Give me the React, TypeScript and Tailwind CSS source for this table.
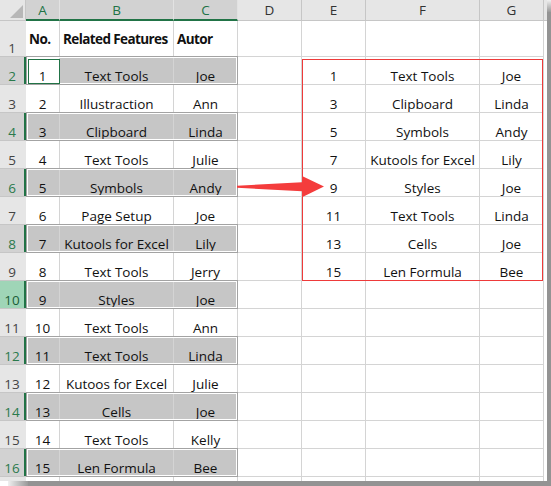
import React from "react";

const COLS = [34, 114, 64, 64, 64, 114, 64];
const LETTERS = ["A", "B", "C", "D", "E", "F", "G"];

const left: [string, string, string][] = [
  ["1", "Text Tools", "Joe"],
  ["2", "Illustraction", "Ann"],
  ["3", "Clipboard", "Linda"],
  ["4", "Text Tools", "Julie"],
  ["5", "Symbols", "Andy"],
  ["6", "Page Setup", "Joe"],
  ["7", "Kutools for Excel", "Lily"],
  ["8", "Text Tools", "Jerry"],
  ["9", "Styles", "Joe"],
  ["10", "Text Tools", "Ann"],
  ["11", "Text Tools", "Linda"],
  ["12", "Kutoos for Excel", "Julie"],
  ["13", "Cells", "Joe"],
  ["14", "Text Tools", "Kelly"],
  ["15", "Len Formula", "Bee"],
];

const right: [string, string, string][] = [
  ["1", "Text Tools", "Joe"],
  ["3", "Clipboard", "Linda"],
  ["5", "Symbols", "Andy"],
  ["7", "Kutools for Excel", "Lily"],
  ["9", "Styles", "Joe"],
  ["11", "Text Tools", "Linda"],
  ["13", "Cells", "Joe"],
  ["15", "Len Formula", "Bee"],
];

function Cell({ w, text, gray, bold }: { w: number; text?: string; gray?: boolean; bold?: boolean }) {
  return (
    <div
      className={`h-full shrink-0 border-r border-b border-[#d4d4d4] flex ${bold ? "items-center justify-start pl-[3px] pt-[1px] font-bold text-[13.5px] tracking-[-0.6px]" : "items-end justify-center pb-0"} ${gray ? "bg-[#c6c6c6]" : "bg-white"} text-[#111] leading-[16px] whitespace-nowrap overflow-visible`}
      style={{ width: w }}
    >
      {text}
    </div>
  );
}

function RowHeader({ n, selected, active }: { n: number; selected: boolean; active?: boolean }) {
  return (
    <div
      className={`h-full w-[26px] shrink-0 border-b border-[#c6c6c6] flex items-end justify-center pb-0 leading-[16px] relative ${active ? "bg-[#9fd5b7] text-[#1b5e38]" : selected ? "bg-[#d2d2d2] text-[#2a7a4c]" : "bg-[#e6e6e6] text-[#444]"}`}
    >
      <span className="pr-[2px]">{n}</span>
      {selected && <div className="absolute right-0 top-0 bottom-0 w-[2px] bg-[#217346]" />}
    </div>
  );
}

export default function App() {
  const rows = [];
  rows.push(
    <div key={1} className="flex h-[36px]">
      <RowHeader n={1} selected={false} />
      <Cell w={COLS[0]} text="No." bold />
      <Cell w={COLS[1]} text="Related Features" bold />
      <Cell w={COLS[2]} text="Autor" bold />
      <Cell w={COLS[3]} />
      <Cell w={COLS[4]} />
      <Cell w={COLS[5]} />
      <Cell w={COLS[6]} />
    </div>
  );
  for (let i = 0; i < 15; i++) {
    const n = i + 2;
    const sel = n % 2 === 0;
    const r = right[i];
    rows.push(
      <div key={n} className="flex h-[28px]">
        <RowHeader n={n} selected={sel} active={n === 10} />
        <Cell w={COLS[0]} text={left[i][0]} gray={sel && n !== 2} />
        <Cell w={COLS[1]} text={left[i][1]} gray={sel} />
        <Cell w={COLS[2]} text={left[i][2]} gray={sel} />
        <Cell w={COLS[3]} />
        <Cell w={COLS[4]} text={r ? r[0] : undefined} />
        <Cell w={COLS[5]} text={r ? r[1] : undefined} />
        <Cell w={COLS[6]} text={r ? r[2] : undefined} />
      </div>
    );
  }

  const selTops = [];
  for (let n = 2; n <= 16; n += 2) selTops.push(57 + (n - 2) * 28);

  return (
    <div className="w-[551px] h-[486px] bg-white overflow-hidden flex flex-col text-[13.5px]" style={{ fontFamily: '"Open Sans", "Noto Sans", sans-serif' }}>
      <div className="flex h-[481px]">
        <div className="w-[547px] h-full relative flex flex-col">
          <div className="flex h-[21px] shrink-0">
            <div className="w-[26px] h-full bg-[#e6e6e6] border-r border-[#c6c6c6] border-b border-b-[#c6c6c6] relative shrink-0">
              <svg className="absolute right-[2px] bottom-[2px]" width="13" height="13" viewBox="0 0 13 13">
                <polygon points="13,0 13,13 0,13" fill="#b7b7b7" />
              </svg>
            </div>
            {COLS.map((w, i) => (
              <div
                key={i}
                className={`h-full shrink-0 flex items-center justify-center leading-[16px] ${i < 3 ? "bg-[#d2d2d2] text-[#217346] border-b-2 border-b-[#217346] border-r border-r-[#e2e2e2]" : "bg-[#e6e6e6] text-[#333] border-b border-b-[#c6c6c6] border-r border-r-[#c6c6c6]"}`}
                style={{ width: w }}
              >
                {LETTERS[i]}
              </div>
            ))}
            <div className="flex-1 h-full bg-[#e6e6e6] border-b border-[#c6c6c6]" />
          </div>
          {rows}
          <div className="flex h-[4px] shrink-0">
            <div className="w-[26px] h-full bg-[#e6e6e6] shrink-0" />
            {COLS.map((w, i) => (
              <div key={i} className="h-full shrink-0 border-r border-[#d4d4d4]" style={{ width: w }} />
            ))}
          </div>

          {selTops.map((t) => (
            <div
              key={t}
              className="absolute left-[26px] w-[212px] h-[29px] border border-[#a3a3a3] shadow-[inset_0_0_0_1px_#ffffff] pointer-events-none"
              style={{ top: t - 1 }}
            />
          ))}
          <div className="absolute left-[28px] top-[59px] w-[32px] h-[25px] border border-[#217346] pointer-events-none" />

          <div className="absolute left-[302px] top-[59px] w-[241px] h-[222px] border border-[#ee3a3a] pointer-events-none" />

          <svg className="absolute left-0 top-0 pointer-events-none" width="547" height="481">
            <polygon points="237,185.7 302,182.3 302,176 324,186.5 302,197.3 302,191.3 237,187.8" fill="#f43c3c" />
          </svg>
        </div>
        <div className="w-[4px] h-full flex flex-col">
          <div className="h-[12px] bg-gradient-to-b from-[#f0f0f0] to-[#9a9a9a]" />
          <div className="flex-1 bg-[#939393]" />
        </div>
      </div>
      <div className="flex h-[5px]">
        <div className="w-[8px] bg-white" />
        <div className="w-[20px] bg-gradient-to-r from-[#f0f0f0] to-[#9a9a9a]" />
        <div className="flex-1 bg-[#939393]" />
      </div>
    </div>
  );
}
